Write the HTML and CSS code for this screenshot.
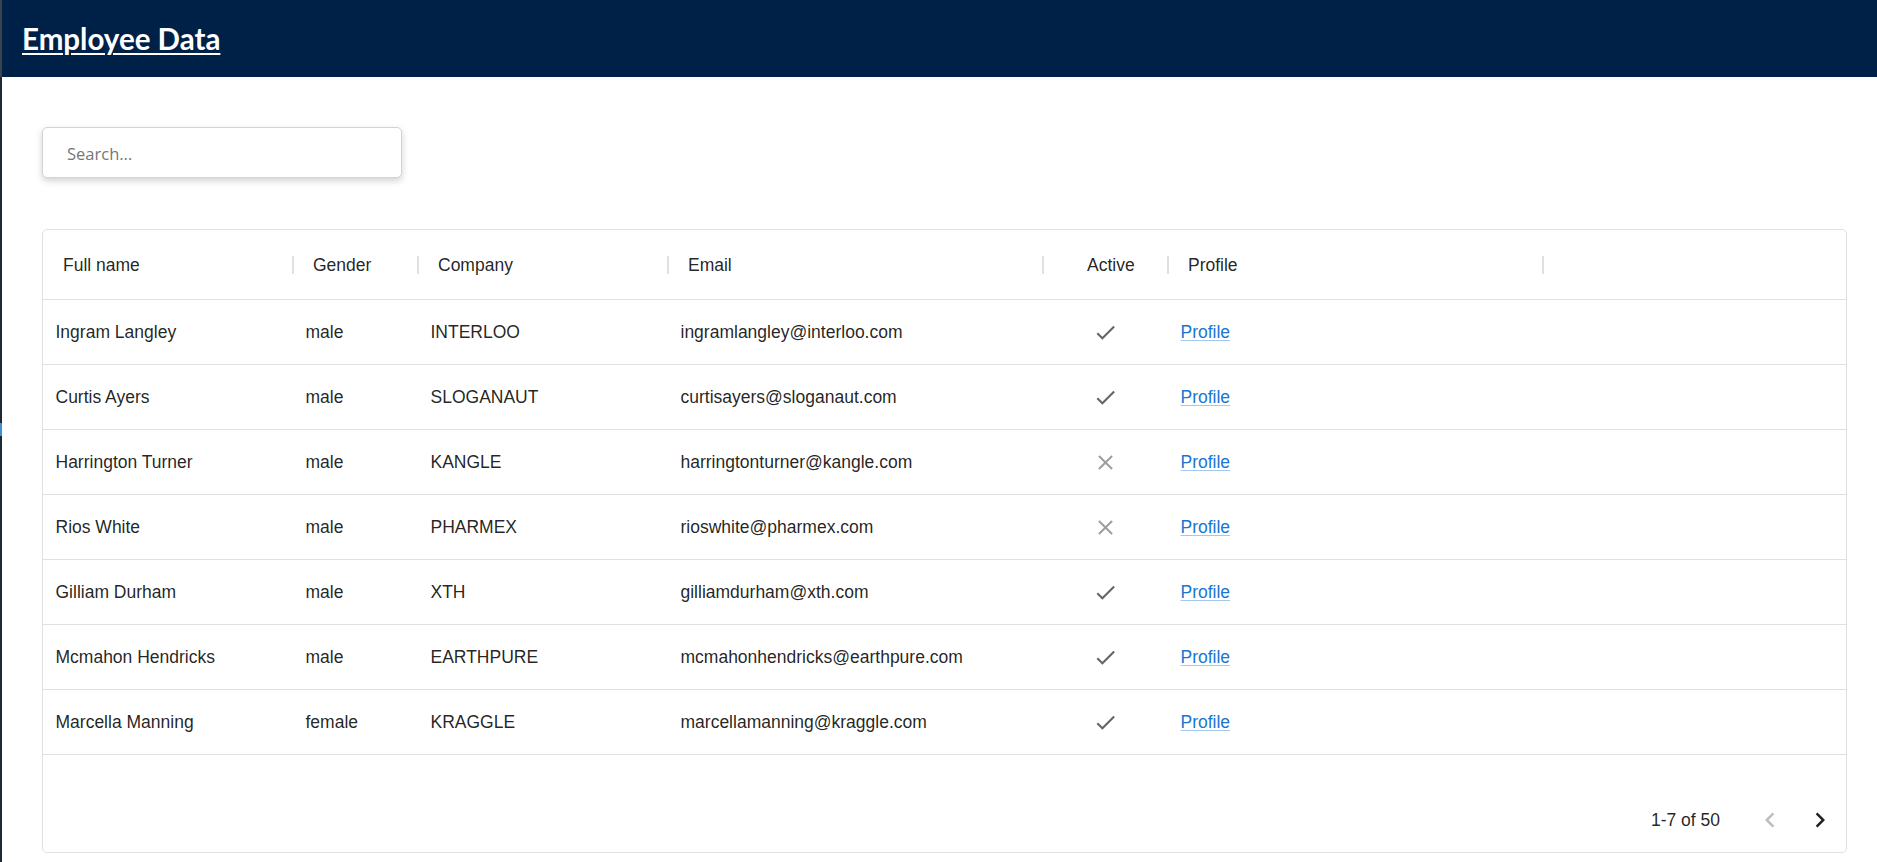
FILE: index.html
```html
<!DOCTYPE html>
<html lang="en">
<head>
<meta charset="utf-8">
<title>Employee Data</title>
<link rel="stylesheet" href="styles.css">
</head>
<body>
<div class="edge"></div>
<div class="page">
  <header class="topbar">
    <a class="title" href="#">Employee Data</a>
  </header>
  <main class="content">
    <div class="search">
      <input class="search-input" type="text" placeholder="Search...">
    </div>

    <div class="grid">
      <div class="row head">
        <div class="hcell"><span class="htitle">Full name</span><span class="sep"></span></div>
        <div class="hcell"><span class="htitle">Gender</span><span class="sep"></span></div>
        <div class="hcell"><span class="htitle">Company</span><span class="sep"></span></div>
        <div class="hcell"><span class="htitle">Email</span><span class="sep"></span></div>
        <div class="hcell center"><span class="htitle">Active</span><span class="sep"></span></div>
        <div class="hcell"><span class="htitle">Profile</span><span class="sep"></span></div>
        <div class="hcell filler"></div>
      </div>

      <div class="row">
        <div class="cell">Ingram Langley</div>
        <div class="cell">male</div>
        <div class="cell">INTERLOO</div>
        <div class="cell">ingramlangley@interloo.com</div>
        <div class="cell center"><svg class="bool yes" viewBox="0 0 24 24"><path d="M9 16.17 4.83 12l-1.42 1.41L9 19 21 7l-1.41-1.41z"/></svg></div>
        <div class="cell"><a class="link" href="#">Profile</a></div>
        <div class="cell"></div>
      </div>
      <div class="row">
        <div class="cell">Curtis Ayers</div>
        <div class="cell">male</div>
        <div class="cell">SLOGANAUT</div>
        <div class="cell">curtisayers@sloganaut.com</div>
        <div class="cell center"><svg class="bool yes" viewBox="0 0 24 24"><path d="M9 16.17 4.83 12l-1.42 1.41L9 19 21 7l-1.41-1.41z"/></svg></div>
        <div class="cell"><a class="link" href="#">Profile</a></div>
        <div class="cell"></div>
      </div>
      <div class="row">
        <div class="cell">Harrington Turner</div>
        <div class="cell">male</div>
        <div class="cell">KANGLE</div>
        <div class="cell">harringtonturner@kangle.com</div>
        <div class="cell center"><svg class="bool no" viewBox="0 0 24 24"><path d="M19 6.41 17.59 5 12 10.59 6.41 5 5 6.41 10.59 12 5 17.59 6.41 19 12 13.41 17.59 19 19 17.59 13.41 12z"/></svg></div>
        <div class="cell"><a class="link" href="#">Profile</a></div>
        <div class="cell"></div>
      </div>
      <div class="row">
        <div class="cell">Rios White</div>
        <div class="cell">male</div>
        <div class="cell">PHARMEX</div>
        <div class="cell">rioswhite@pharmex.com</div>
        <div class="cell center"><svg class="bool no" viewBox="0 0 24 24"><path d="M19 6.41 17.59 5 12 10.59 6.41 5 5 6.41 10.59 12 5 17.59 6.41 19 12 13.41 17.59 19 19 17.59 13.41 12z"/></svg></div>
        <div class="cell"><a class="link" href="#">Profile</a></div>
        <div class="cell"></div>
      </div>
      <div class="row">
        <div class="cell">Gilliam Durham</div>
        <div class="cell">male</div>
        <div class="cell">XTH</div>
        <div class="cell">gilliamdurham@xth.com</div>
        <div class="cell center"><svg class="bool yes" viewBox="0 0 24 24"><path d="M9 16.17 4.83 12l-1.42 1.41L9 19 21 7l-1.41-1.41z"/></svg></div>
        <div class="cell"><a class="link" href="#">Profile</a></div>
        <div class="cell"></div>
      </div>
      <div class="row">
        <div class="cell">Mcmahon Hendricks</div>
        <div class="cell">male</div>
        <div class="cell">EARTHPURE</div>
        <div class="cell">mcmahonhendricks@earthpure.com</div>
        <div class="cell center"><svg class="bool yes" viewBox="0 0 24 24"><path d="M9 16.17 4.83 12l-1.42 1.41L9 19 21 7l-1.41-1.41z"/></svg></div>
        <div class="cell"><a class="link" href="#">Profile</a></div>
        <div class="cell"></div>
      </div>
      <div class="row">
        <div class="cell">Marcella Manning</div>
        <div class="cell">female</div>
        <div class="cell">KRAGGLE</div>
        <div class="cell">marcellamanning@kraggle.com</div>
        <div class="cell center"><svg class="bool yes" viewBox="0 0 24 24"><path d="M9 16.17 4.83 12l-1.42 1.41L9 19 21 7l-1.41-1.41z"/></svg></div>
        <div class="cell"><a class="link" href="#">Profile</a></div>
        <div class="cell"></div>
      </div>

      <div class="spacer"></div>

      <div class="footer">
        <span class="count">1-7 of 50</span>
        <div class="pager">
          <button class="pbtn disabled" type="button" aria-label="Previous page"><svg viewBox="0 0 24 24"><path d="M15.41 16.59 10.83 12l4.58-4.59L14 6l-6 6 6 6 1.41-1.41z"/></svg></button>
          <button class="pbtn" type="button" aria-label="Next page"><svg viewBox="0 0 24 24"><path d="M8.59 16.59 13.17 12 8.59 7.41 10 6l6 6-6 6-1.41-1.41z"/></svg></button>
        </div>
      </div>
    </div>
  </main>
</div>
</body>
</html>
```

FILE: styles.css
```css
* {
  box-sizing: border-box;
}

html, body {
  margin: 0;
  padding: 0;
  background: #ffffff;
}

body {
  display: flex;
  min-height: 862px;
  font-family: "Liberation Sans", Arial, sans-serif;
  color: rgba(0, 0, 0, 0.87);
}

.edge {
  width: 2px;
  flex: 0 0 2px;
  background: linear-gradient(to bottom,
    #3a4350 0, #3a4350 77px,
    #1e2833 77px, #1e2833 423px,
    #3d8fd6 423px, #3d8fd6 436px,
    #1e2833 436px, #1e2833 100%);
}

.page {
  flex: 1;
  display: flex;
  flex-direction: column;
  min-width: 0;
}

.topbar {
  height: 77px;
  background: #002147;
  display: flex;
  align-items: center;
  padding-left: 20px;
}

.title {
  font-family: Lato, "Open Sans", sans-serif;
  font-weight: 700;
  font-size: 29.5px;
  color: #ffffff;
  text-decoration: underline;
  text-decoration-thickness: 2px;
  text-underline-offset: 3px;
  line-height: 1;
  margin-top: 1px;
}

.content {
  padding: 50px 30px 9px 40px;
  display: flex;
  flex-direction: column;
}

.search {
  width: 360px;
  height: 51px;
  border: 1px solid #d2d2d2;
  border-radius: 5px;
  box-shadow: 0 3px 7px rgba(0, 0, 0, 0.18);
  background: #fff;
  display: flex;
  align-items: center;
  margin-bottom: 51px;
}

.search-input {
  border: none;
  outline: none;
  background: transparent;
  width: 100%;
  height: 100%;
  padding: 1px 0 0 24px;
  font-family: "Open Sans", sans-serif;
  font-size: 16.5px;
  color: #333;
}

.search-input::placeholder {
  color: #767676;
}

.grid {
  height: 624px;
  border: 1px solid #e0e0e0;
  border-radius: 5px;
  display: flex;
  flex-direction: column;
  font-size: 17.5px;
}

.row {
  display: grid;
  grid-template-columns: 250px 125px 250px 375px 125px 375px 1fr;
  height: 65px;
  flex: 0 0 65px;
  border-bottom: 1px solid #e0e0e0;
}

.row.head {
  height: 70px;
  flex: 0 0 70px;
}

.hcell {
  display: flex;
  align-items: center;
  padding-left: 20px;
  padding-top: 1px;
}

.hcell .htitle {
  flex: 1;
}

.hcell.center {
  padding-left: 12px;
}

.hcell.center .htitle {
  text-align: center;
}

.hcell.filler {
  padding: 0;
}

.sep {
  width: 2.5px;
  height: 17.5px;
  background: #e0e0e0;
  margin-right: -1.25px;
  flex: 0 0 2.5px;
}

.cell {
  display: flex;
  align-items: center;
  padding: 0 12.5px;
  white-space: nowrap;
  overflow: hidden;
}

.cell.center {
  justify-content: center;
}

.bool {
  width: 25px;
  height: 25px;
}

.bool.yes {
  fill: rgba(0, 0, 0, 0.6);
}

.bool.no {
  fill: rgba(0, 0, 0, 0.38);
}

.link {
  color: #1976d2;
  text-decoration: underline;
  text-decoration-color: rgba(25, 118, 210, 0.4);
  text-underline-offset: 2px;
}

.spacer {
  flex: 1;
}

.footer {
  height: 65px;
  flex: 0 0 65px;
  display: flex;
  align-items: center;
  justify-content: flex-end;
  padding-right: 1px;
}

.count {
  margin-right: 25px;
  margin-top: 1px;
}

.pager {
  display: flex;
}

.pbtn {
  width: 50px;
  height: 50px;
  border: none;
  background: transparent;
  padding: 0;
  display: flex;
  align-items: center;
  justify-content: center;
  cursor: pointer;
}

.pbtn svg {
  width: 30px;
  height: 30px;
  fill: rgba(0, 0, 0, 0.87);
}

.pbtn.disabled svg {
  fill: rgba(0, 0, 0, 0.26);
}
```
